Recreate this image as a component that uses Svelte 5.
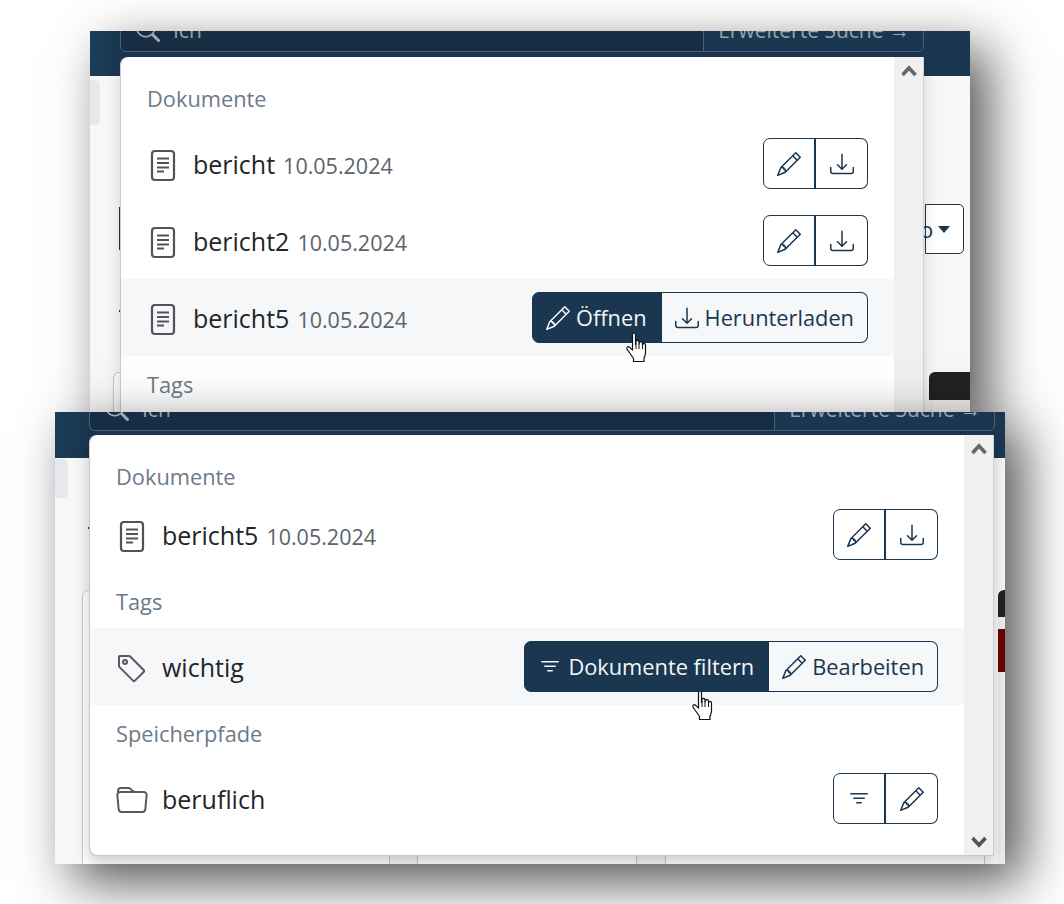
<script>
  const pencil = ['M12.146.146a.5.5 0 0 1 .708 0l3 3a.5.5 0 0 1 0 .708l-10 10a.5.5 0 0 1-.168.11l-5 2a.5.5 0 0 1-.65-.65l2-5a.5.5 0 0 1 .11-.168l10-10zM11.207 2.5 13.5 4.793 14.793 3.5 12.5 1.207 11.207 2.5zm1.586 3L10.5 3.207 4 9.707V10h.5a.5.5 0 0 1 .5.5v.5h.5a.5.5 0 0 1 .5.5v.5h.293l6.5-6.5zm-9.761 5.175-.106.106-1.528 3.821 3.821-1.528.106-.106A.5.5 0 0 1 5 12.5V12h-.5a.5.5 0 0 1-.5-.5V11h-.5a.5.5 0 0 1-.468-.325z']
  const download = [
    'M.5 9.9a.5.5 0 0 1 .5.5v2.5a1 1 0 0 0 1 1h12a1 1 0 0 0 1-1v-2.5a.5.5 0 0 1 1 0v2.5a2 2 0 0 1-2 2H2a2 2 0 0 1-2-2v-2.5a.5.5 0 0 1 .5-.5z',
    'M7.646 11.854a.5.5 0 0 0 .708 0l3-3a.5.5 0 0 0-.708-.708L8.5 10.293V1.5a.5.5 0 0 0-1 0v8.793L5.354 8.146a.5.5 0 1 0-.708.708l3 3z'
  ]
  const filter = ['M6 10.5a.5.5 0 0 1 .5-.5h3a.5.5 0 0 1 0 1h-3a.5.5 0 0 1-.5-.5zm-2-3a.5.5 0 0 1 .5-.5h7a.5.5 0 0 1 0 1h-7a.5.5 0 0 1-.5-.5zm-2-3a.5.5 0 0 1 .5-.5h11a.5.5 0 0 1 0 1h-11a.5.5 0 0 1-.5-.5z']
  const tag = [
    'M6 4.5a1.5 1.5 0 1 1-3 0 1.5 1.5 0 0 1 3 0zm-1 0a.5.5 0 1 0-1 0 .5.5 0 0 0 1 0z',
    'M2 1h4.586a1 1 0 0 1 .707.293l7 7a1 1 0 0 1 0 1.414l-4.586 4.586a1 1 0 0 1-1.414 0l-7-7A1 1 0 0 1 1 6.586V2a1 1 0 0 1 1-1zm0 5.586 7 7L13.586 9l-7-7H2v4.586z'
  ]
  const folder = ['M.54 3.87.5 3a2 2 0 0 1 2-2h3.672a2 2 0 0 1 1.414.586l.828.828A2 2 0 0 0 9.828 3h3.982a2 2 0 0 1 1.992 2.181l-.637 7A2 2 0 0 1 13.174 14H2.826a2 2 0 0 1-1.991-1.819l-.637-7a1.99 1.99 0 0 1 .342-1.31zM2.19 4a1 1 0 0 0-.996 1.09l.637 7a1 1 0 0 0 .995.91h10.348a1 1 0 0 0 .995-.91l.637-7A1 1 0 0 0 13.81 4H2.19zm4.69-1.707A1 1 0 0 0 6.172 2H2.5a1 1 0 0 0-1 .981l.006.139C1.72 3.042 1.95 3 2.19 3h5.396l-.707-.707z']
  const search = ['M11.742 10.344a6.5 6.5 0 1 0-1.397 1.398h-.001c.03.04.062.078.098.115l3.85 3.85a1 1 0 0 0 1.415-1.414l-3.85-3.85a1.007 1.007 0 0 0-.115-.1zM12 6.5a5.5 5.5 0 1 1-11 0 5.5 5.5 0 0 1 11 0z']

  const docActions = [{ icon: pencil, label: 'Öffnen' }, { icon: download, label: 'Herunterladen' }]
  const filterActions = [{ icon: filter, label: 'Dokumente filtern' }, { icon: pencil, label: 'Bearbeiten' }]

  const topGroups = [
    { title: 'Dokumente', rows: [
      { kind: 'doc', name: 'bericht', date: '10.05.2024', actions: docActions },
      { kind: 'doc', name: 'bericht2', date: '10.05.2024', actions: docActions },
      { kind: 'doc', name: 'bericht5', date: '10.05.2024', actions: docActions, active: true }
    ] },
    { title: 'Tags', rows: [] }
  ]
  const bottomGroups = [
    { title: 'Dokumente', rows: [{ kind: 'doc', name: 'bericht5', date: '10.05.2024', actions: docActions }] },
    { title: 'Tags', rows: [{ kind: tag, name: 'wichtig', actions: filterActions, active: true }] },
    { title: 'Speicherpfade', rows: [{ kind: folder, name: 'beruflich', actions: filterActions }] }
  ]
</script>

{#snippet icon(paths, size)}
  <svg class="bi" width={size} height={size} viewBox="0 0 16 16" fill="currentColor" aria-hidden="true">
    {#each paths as d}<path {d} fill-rule="evenodd" />{/each}
  </svg>
{/snippet}

{#snippet docIcon()}
  <svg class="doc" width="26" height="33" viewBox="0 0 26 33" fill="none" stroke="#505458" aria-hidden="true">
    <rect x="2" y="2" width="22" height="29" rx="3" stroke-width="2.200" />
    <path d="M7 9.500h12M7 14h12M7 18.500h12M7 22.500h7" stroke-width="1.800" />
  </svg>
{/snippet}

{#snippet hand()}
  <svg class="hand" width="24" height="34" viewBox="0 0 24 34" aria-hidden="true">
    <path d="M7.500 2.500c0-2 3-2 3 0v10l.5-3c.5-1.500 3-1.500 3 .5v2l.5-1.500c.5-1.500 3-1 3 .5v2l.5-1c.8-1 2.500-.5 2.500 1v8c0 2-1 3.500-1.500 5v3.500H8.500v-3c-1-2-5.500-7.500-6.500-9.500-.8-1.800 1-3 2.500-1.800l3 3z" fill="#fff" stroke="#111" stroke-width="1.200" stroke-linejoin="round" />
    <path d="M11 11v6M14 12v5M17.500 13v4" stroke="#111" stroke-width="1" fill="none" />
  </svg>
{/snippet}

{#snippet searchBar()}
  <div class="search">
    <span class="search-icon">{@render icon(search, 24)}</span>
    <span class="query">Ich</span>
    <span class="advanced">Erweiterte Suche →</span>
  </div>
{/snippet}

{#snippet list(groups)}
  {#each groups as group, i}
    <div class="label" class:first={i === 0}>{group.title}</div>
    {#each group.rows as row}
      <div class="row" class:active={row.active}>
        <span class="kind-box">
          {#if row.kind === 'doc'}
            {@render docIcon()}
          {:else}
            {@render icon(row.kind, 32)}
          {/if}
        </span>
        <span class="name">{row.name}</span>
        {#if row.date}<span class="date">{row.date}</span>{/if}
        <div class="actions">
          {#each row.actions as action, a}
            <span class="btn" class:wide={row.active} class:solid={row.active && a === 0}>
              {@render icon(action.icon, 24)}
              {#if row.active}<span class="btn-text">{action.label}</span>{/if}
              {#if row.active && a === 0}{@render hand()}{/if}
            </span>
          {/each}
        </div>
      </div>
    {/each}
  {/each}
{/snippet}

<main class="canvas">
  <section class="shot top">
    <header class="bar">{@render searchBar()}</header>
    <div class="tab"></div>
    <div class="page-btn"><span class="page-o">o</span><span class="caret"></span></div>
    <div class="edge-btn"></div>
    <div class="edge-dot"></div>
    <div class="page-card left-card"></div>
    <div class="page-card dark-card"></div>
    <div class="dropdown">
      <div class="results">{@render list(topGroups)}</div>
      <div class="scroll">
        <svg width="16" height="12" viewBox="0 0 16 12"><path d="M1.500 10 8 3l6.500 7" fill="none" stroke="#666" stroke-width="3.600" /></svg>
      </div>
    </div>
  </section>

  <section class="shot bottom">
    <header class="bar">{@render searchBar()}</header>
    <div class="tab"></div>
    <div class="edge-dot"></div>
    <div class="page-card low-a"></div>
    <div class="page-card low-b"></div>
    <div class="page-card low-c"></div>
    <div class="page-card low-dark"><div class="low-red"></div></div>
    <div class="dropdown">
      <div class="results">{@render list(bottomGroups)}</div>
      <div class="scroll">
        <svg width="16" height="12" viewBox="0 0 16 12"><path d="M1.500 10 8 3l6.500 7" fill="none" stroke="#666" stroke-width="3.600" /></svg>
        <svg width="16" height="12" viewBox="0 0 16 12"><path d="M1.500 2 8 9l6.500-7" fill="none" stroke="#555" stroke-width="3.600" /></svg>
      </div>
    </div>
  </section>
</main>

<style>
  :global(body) {
    background: #fff;
    font-family: "Open Sans", "Noto Sans", sans-serif;
  }

  .canvas {
    position: relative;
    width: 1064px;
    height: 904px;
    overflow: hidden;
    background: #fff;
  }

  /* the two screenshots sit freely on the canvas */
  .shot {
    position: absolute;
    background: #f7f7f7;
    box-shadow: 18px 18px 50px rgba(0, 0, 0, 0.68);
    overflow: hidden;
  }

  .top { left: 90px; top: 31px; width: 880px; height: 381px; }
  .bottom { left: 55px; top: 412px; width: 950px; height: 452px; }

  .bar {
    display: flow-root;
    height: 45px;
    background: linear-gradient(90deg, #1c3c58, #1a3650 30px);
  }

  .bottom .bar { height: 46px; }

  .search {
    box-sizing: border-box;
    height: 50px;
    margin: -29px 46px 0 30px;
    display: flex;
    align-items: center;
    border: 1px solid #4c6176;
    border-radius: 6px;
    background: #172d44;
    color: #98a3ae;
    font-size: 21px;
  }

  .bottom .search {
    margin: -31px 10px 0 34px;
  }

  .search-icon { display: flex; margin: 6px 13px 0 15px; color: #a4abb2; }
  .query { margin-top: 6px; }

  .advanced {
    margin-left: auto;
    align-self: stretch;
    display: flex;
    align-items: center;
    padding: 6px 13px 0 14px;
    border-left: 1px solid #4c6176;
    background: #1a3650;
    border-radius: 0 6px 6px 0;
  }

  .tab {
    position: absolute;
    left: 0;
    top: 49px;
    width: 10px;
    height: 45px;
    background: #e5e9ee;
    border-radius: 0 5px 5px 0;
  }

  .bottom .tab { top: 47px; width: 13px; height: 39px; }

  .page-btn {
    position: absolute;
    left: 835px;
    top: 173px;
    width: 39px;
    height: 50px;
    box-sizing: border-box;
    border: 1px solid #1a3650;
    border-radius: 0 5px 5px 0;
    background: #fff;
    display: flex;
    align-items: center;
    gap: 6px;
    font-size: 22px;
    color: #1a3650;
  }

  .page-o { margin-left: -6px; width: 12px; }

  .caret {
    width: 0;
    height: 0;
    border: 6px solid transparent;
    border-top: 7px solid #1a3650;
    border-bottom: 0;
  }

  .edge-btn {
    position: absolute;
    left: 29px;
    top: 176px;
    width: 4px;
    height: 43px;
    background: #1a3650;
  }

  .edge-dot {
    position: absolute;
    left: 29px;
    top: 279px;
    width: 3px;
    height: 2px;
    background: #1a3650;
  }

  .bottom .edge-dot { left: 33px; top: 115px; }

  .page-card {
    position: absolute;
    box-sizing: border-box;
    border: 1px solid #c9c9c9;
    border-radius: 6px;
    background: #fff;
  }

  .left-card { left: 23px; top: 341px; width: 40px; height: 70px; }

  .dark-card {
    left: 839px;
    top: 341px;
    width: 60px;
    height: 70px;
    border: 0;
    border-top: 28px solid #222;
    background: #eee;
  }

  .low-a { left: 27px; top: 178px; width: 308px; height: 300px; }
  .low-b { left: 362px; top: 178px; width: 220px; height: 300px; }
  .low-c { left: 610px; top: 178px; width: 320px; height: 300px; }

  .low-dark {
    left: 943px;
    top: 178px;
    width: 40px;
    height: 300px;
    border: 0;
    border-top: 27px solid #222;
    background: #eee;
  }

  .low-red {
    margin-top: 12px;
    height: 43px;
    background: #690505;
  }

  .dropdown {
    position: absolute;
    left: 30px;
    top: 26px;
    width: 803px;
    height: 400px;
    display: flex;
    border-left: 1px solid #c9c9c9;
    border-radius: 8px 0 0 0;
    overflow: hidden;
    background: #fff;
    box-shadow: 0 8px 16px rgba(0, 0, 0, 0.15);
  }

  .bottom .dropdown {
    left: 34px;
    top: 23px;
    width: 904px;
    height: 420px;
    border-radius: 8px 0 0 8px;
    box-shadow: 0 1px 0 #c8c8c8, 0 8px 16px rgba(0, 0, 0, 0.2);
  }

  .results {
    flex: 1;
    padding-top: 13px;
  }

  .scroll {
    flex: none;
    box-sizing: border-box;
    width: 30px;
    padding: 8px 0 7px;
    display: flex;
    flex-direction: column;
    justify-content: space-between;
    align-items: center;
    background: #f0f0f0;
    border-right: 1px solid #d0d0d0;
  }

  .scroll svg { display: block; }

  .label {
    box-sizing: border-box;
    height: 55px;
    padding: 15px 26px 0;
    font-size: 21.800px;
    line-height: 28px;
    color: #6c7a89;
  }

  .bottom .label.first { margin-bottom: -7px; }

  .row {
    height: 77px;
    box-sizing: border-box;
    padding: 0 26px;
    display: flex;
    align-items: center;
  }

  .row.active { background: #f6f7f9; }

  .kind-box {
    flex: none;
    width: 46px;
    display: flex;
    margin-top: 4px;
    color: #565a5e;
  }

  .doc { margin-left: 3px; }

  .name {
    font-size: 25px;
    color: #212529;
    margin-top: 1px;
  }

  .date {
    font-size: 21.500px;
    color: #5c636a;
    margin: 3px 0 0 8px;
  }

  .actions {
    margin-left: auto;
    display: flex;
  }

  .btn {
    position: relative;
    box-sizing: border-box;
    height: 51px;
    width: 52px;
    display: flex;
    align-items: center;
    justify-content: center;
    gap: 6px;
    border: 1px solid #1a3650;
    color: #1a3650;
    font-size: 21.800px;
  }

  .btn + .btn { width: 54px; margin-left: -1px; border-left-width: 2px; }

  .btn.wide {
    width: auto;
    padding: 0 13px;
  }

  .btn:first-child { border-radius: 7px 0 0 7px; }
  .btn:last-child { border-radius: 0 7px 7px 0; }

  .btn.solid {
    background: #1a3650;
    color: #f4f6f8;
  }

  .hand {
    position: absolute;
    left: 92px;
    top: 39px;
    z-index: 2;
  }

  .bottom .hand { left: 166px; top: 48px; }
</style>
